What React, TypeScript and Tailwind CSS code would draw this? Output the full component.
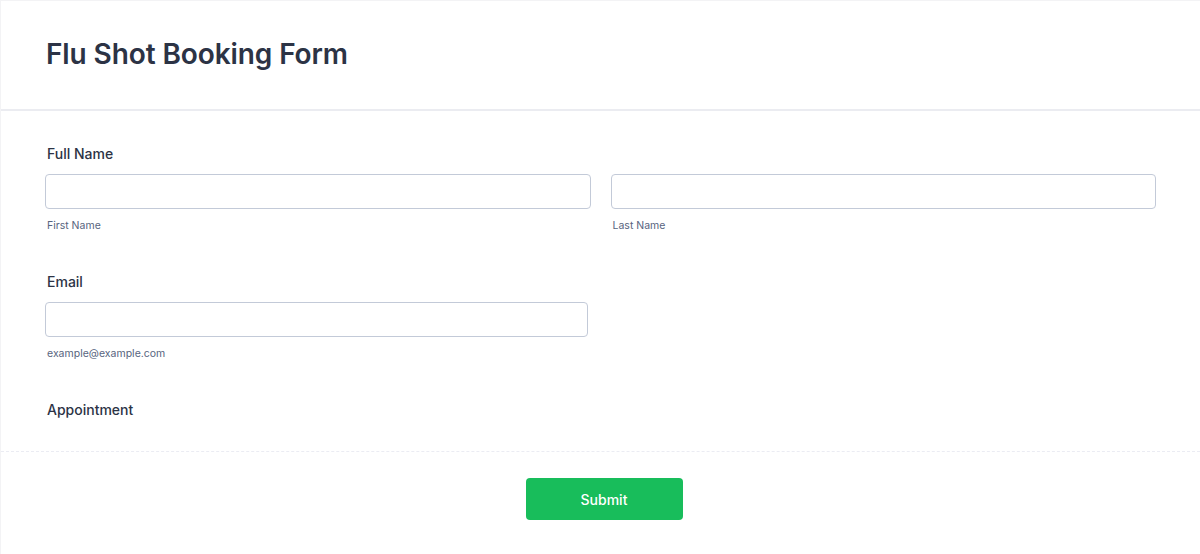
import React from 'react'

function SubField({ label, className = '' }: { label: string; className?: string }) {
  return (
    <div className={`flex flex-col ${className}`}>
      <input
        type="text"
        className="h-[35px] w-full rounded-[4px] border border-[#c3cad8] bg-white outline-none"
      />
      <span className="mt-[10px] pl-[2px] text-[10.5px] leading-[14px] text-[#57647e]">{label}</span>
    </div>
  )
}

export default function App() {
  return (
    <div
      className="flex h-[554px] w-full flex-col border-l border-t border-[#f3f3f5] bg-white text-[#2c3345]"
      style={{ fontFamily: 'Inter, "Liberation Sans", sans-serif' }}
    >
      {/* Header */}
      <header className="flex h-[110px] shrink-0 items-center border-b-2 border-[#ebecf1] px-[44px] pb-[3px]">
        <h1 className="pl-[1px] text-[28px] font-semibold leading-[34px] tracking-[-0.1px]">Flu Shot Booking Form</h1>
      </header>

      {/* Form fields */}
      <main className="h-[340px] shrink-0 px-[44px] pt-[33px]">
        <div className="pb-[39px]">
          <label className="block h-[20px] pl-[2px] text-[14px] font-medium leading-[20px]">Full Name</label>
          <div className="mt-[10px] grid grid-cols-2 gap-[20px]">
            <SubField label="First Name" />
            <SubField label="Last Name" />
          </div>
        </div>

        <div className="pb-[39px]">
          <label className="block h-[20px] pl-[2px] text-[14px] font-medium leading-[20px]">Email</label>
          <div className="mt-[10px] w-[543px]">
            <SubField label="example@example.com" />
          </div>
        </div>

        <div>
          <label className="block h-[20px] pl-[2px] text-[14px] font-medium leading-[20px]">Appointment</label>
        </div>
      </main>

      {/* Footer */}
      <footer className="flex flex-1 justify-center border-t border-dashed border-[#ebecf3] pl-[7px] pt-[26px]">
        <button className="h-[42px] w-[157px] rounded-[4px] bg-[#18bd5b] text-[14px] font-medium text-white">
          Submit
        </button>
      </footer>
    </div>
  )
}
